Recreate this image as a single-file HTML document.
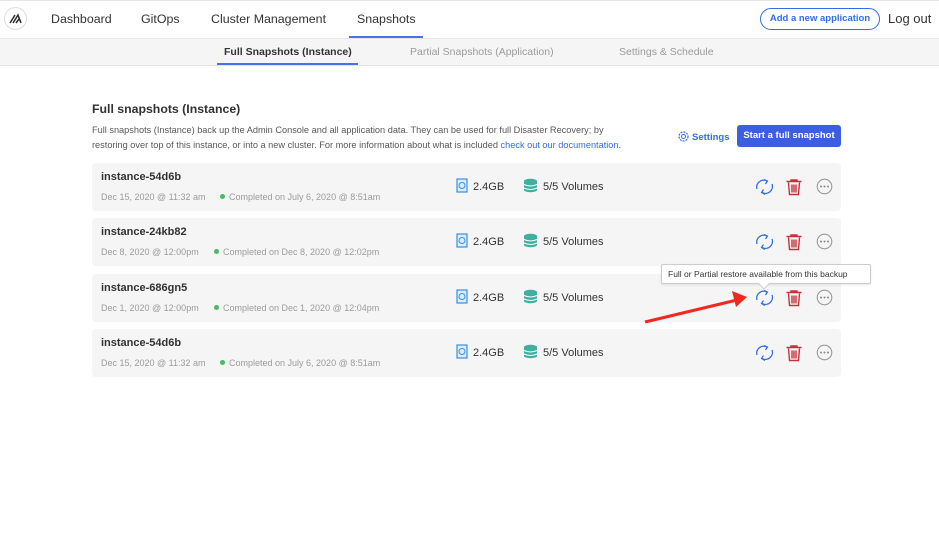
<!DOCTYPE html>
<html><head><meta charset="utf-8"><style>
*{margin:0;padding:0;box-sizing:border-box}
body{width:939px;height:555px;background:#fff;font-family:"Liberation Sans",Arial,sans-serif;position:relative;overflow:hidden;color:#323232}
.a{position:absolute;white-space:nowrap}
.nav{font-size:12.4px;color:#323232;top:12px}
.sub{font-size:10.5px;top:46px;color:#9b9b9b}
.row{position:absolute;left:92px;width:749px;height:48px;background:#f5f5f5;border-radius:4px}
.row .n{position:absolute;left:9px;top:8px;font-size:11px;font-weight:bold;color:#323232}
.row .d{position:absolute;left:9px;top:29px;font-size:9px;color:#9b9b9b}
.row .c{position:absolute;top:29px;font-size:9px;color:#9b9b9b}
.row .c:before{content:"";display:inline-block;width:5px;height:5px;border-radius:50%;background:#44bb66;margin-right:4px;vertical-align:1px}
.row .s{position:absolute;left:381px;top:18px;font-size:11px;color:#323232}
.row .v{position:absolute;left:451px;top:18px;font-size:11px;color:#323232}
</style></head><body>
<div style="position:absolute;left:0;top:0;width:939px;height:1px;background:#e6e6e6"></div>
<div class="a" style="left:4px;top:7px;width:23px;height:23px;border:1px solid #ddd;border-radius:50%"><svg width="21" height="21" viewBox="0 0 21 21"><path d="M5 15l5-8M8 15l5-8 3 8M11 15l3-4" stroke="#333" stroke-width="1.6" fill="none"/></svg></div>
<div class="a nav" style="left:51px">Dashboard</div>
<div class="a nav" style="left:141px">GitOps</div>
<div class="a nav" style="left:211px">Cluster Management</div>
<div class="a nav" style="left:357px">Snapshots</div>
<div class="a" style="left:349px;top:36px;width:74px;height:2px;background:#4a72e8"></div>
<div class="a" style="left:760px;top:8px;width:120px;height:22px;border:1px solid #326de6;border-radius:12px;color:#326de6;font-size:9.5px;font-weight:bold;text-align:center;line-height:20px">Add a new application</div>
<div class="a" style="left:888px;top:11px;font-size:13px;color:#323232">Log out</div>
<div class="a" style="left:0;top:38px;width:939px;height:28px;background:#f5f5f5;border-top:1px solid #e6e6e6;border-bottom:1px solid #e4e4e4"></div>
<div class="a sub" style="left:224px;color:#323232;font-weight:bold">Full Snapshots (Instance)</div>
<div class="a" style="left:217px;top:63px;width:141px;height:2px;background:#4a72e8"></div>
<div class="a sub" style="left:410px">Partial Snapshots (Application)</div>
<div class="a sub" style="left:619px">Settings &amp; Schedule</div>
<div class="a" style="left:92px;top:102px;font-size:12.3px;font-weight:bold;color:#323232">Full snapshots (Instance)</div>
<div class="a" style="left:92px;top:123px;font-size:9.2px;color:#585858;line-height:15px">Full snapshots (Instance) back up the Admin Console and all application data. They can be used for full Disaster Recovery; by<br>restoring over top of this instance, or into a new cluster. For more information about what is included <span style="color:#326de6">check out our documentation</span>.</div>
<div class="a" style="left:677px;top:130px;font-size:9.5px;font-weight:bold;color:#326de6"><svg width="13" height="13" viewBox="0 0 13 13" style="vertical-align:-3px;margin-right:2px"><circle cx="6.5" cy="6.5" r="4.5" fill="none" stroke="#326de6" stroke-width="1.2" stroke-dasharray="2 1"/><circle cx="6.5" cy="6.5" r="2" fill="none" stroke="#326de6"/></svg>Settings</div>
<div class="a" style="left:737px;top:125px;width:104px;height:22px;background:#3b5fe0;border-radius:3px;color:#fff;font-size:9.5px;font-weight:bold;text-align:center;line-height:22px">Start a full snapshot</div>

<div class="row" style="top:163px"><div class="n">instance-54d6b</div><div class="d">Dec 15, 2020 @ 11:32 am</div><div class="c" style="left:128px">Completed on July 6, 2020 @ 8:51am</div><div class="s">2.4GB</div><div class="v">5/5 Volumes</div></div>
<div class="row" style="top:218px"><div class="n">instance-24kb82</div><div class="d">Dec 8, 2020 @ 12:00pm</div><div class="c" style="left:122px">Completed on Dec 8, 2020 @ 12:02pm</div><div class="s">2.4GB</div><div class="v">5/5 Volumes</div></div>
<div class="row" style="top:274px"><div class="n">instance-686gn5</div><div class="d">Dec 1, 2020 @ 12:00pm</div><div class="c" style="left:122px">Completed on Dec 1, 2020 @ 12:04pm</div><div class="s">2.4GB</div><div class="v">5/5 Volumes</div></div>
<div class="row" style="top:329px"><div class="n">instance-54d6b</div><div class="d">Dec 15, 2020 @ 11:32 am</div><div class="c" style="left:128px">Completed on July 6, 2020 @ 8:51am</div><div class="s">2.4GB</div><div class="v">5/5 Volumes</div></div>

<svg class="a" style="left:0;top:0" width="939" height="555">
<defs>
<g id="ic">
<rect x="457" y="0" width="10" height="13" fill="#d9ecfb" stroke="#3a8fe0" stroke-width="1.2"/>
<circle cx="462" cy="6.5" r="3" fill="none" stroke="#3a8fe0"/>
<ellipse cx="530.5" cy="2" rx="6.5" ry="2.2" fill="#3fb0a0"/>
<rect x="524" y="2" width="13" height="9" fill="#3fb0a0"/>
<ellipse cx="530.5" cy="11" rx="6.5" ry="2.2" fill="#3fb0a0"/>
<path d="M524 5.5q6.5 3 13 0M524 9q6.5 3 13 0" stroke="#fff" fill="none"/>
<path d="M757 10a7 7 0 0 1 10-8M772 5a7 7 0 0 1-10 8.5" stroke="#326de6" stroke-width="1.3" fill="none"/>
<path d="M764 0.5l3.5 1.5-2 3M765 15.5l-3.5-2 2-3" stroke="#326de6" stroke-width="1.2" fill="none"/>
<path d="M786.5 2.5h15M791 2.5v-1.5h6v1.5M788.5 3.5l1 12h9l1-12M792 5.5v8M794 5.5v8M796 5.5v8" stroke="#c6313b" stroke-width="1.4" fill="none"/>
<circle cx="824.5" cy="7.5" r="7.3" fill="none" stroke="#999" stroke-width="1.1"/>
<circle cx="821" cy="7.5" r="1" fill="#888"/><circle cx="824.5" cy="7.5" r="1" fill="#888"/><circle cx="828" cy="7.5" r="1" fill="#888"/>
</g>
</defs>
<use href="#ic" y="179"/>
<use href="#ic" y="234"/>
<use href="#ic" y="290"/>
<use href="#ic" y="345"/>
<path d="M645 322L737 300" stroke="#f0281e" stroke-width="3"/>
<path d="M747 297l-15-6 4 16z" fill="#f0281e"/>
</svg>
<div class="a" style="left:661px;top:264px;width:210px;height:20px;background:#fff;border:1px solid #ccc;border-radius:2px;font-size:8.5px;color:#323232;line-height:18px;padding-left:6px;box-shadow:0 1px 2px rgba(0,0,0,.1)">Full or Partial restore available from this backup</div>
<div class="a" style="left:760px;top:280px;width:8px;height:8px;background:#fff;border-right:1px solid #ccc;border-bottom:1px solid #ccc;transform:rotate(45deg)"></div>
</body></html>
